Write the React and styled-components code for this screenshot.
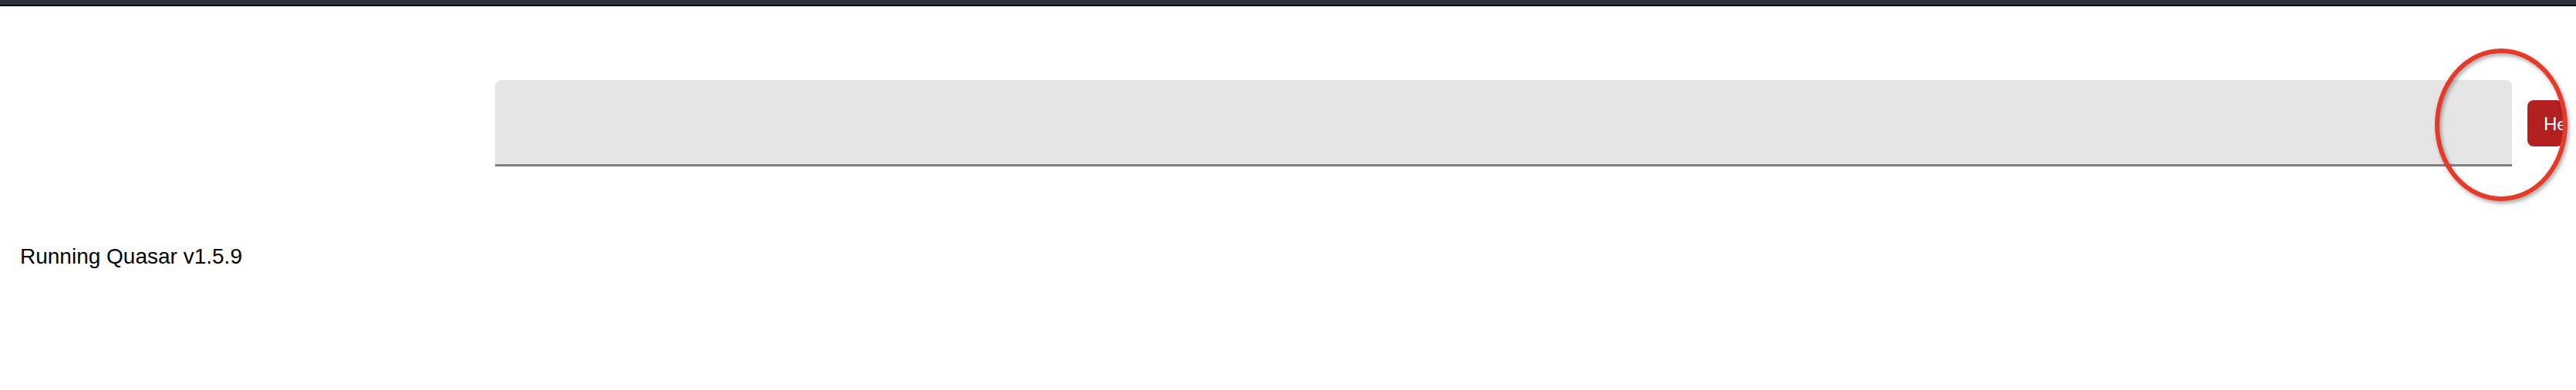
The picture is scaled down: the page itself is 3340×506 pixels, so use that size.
import React from "react";
import styled, { createGlobalStyle } from "styled-components";

const GlobalStyle = createGlobalStyle`
  html, body {
    margin: 0;
    padding: 0;
    background: #ffffff;
    font-family: "Liberation Sans", Arial, sans-serif;
  }
`;

const Screen = styled.div`
  position: relative;
  width: 3340px;
  height: 506px;
  overflow: hidden;
  background: #ffffff;
`;

const TopBar = styled.div`
  height: 6px;
  background: #30333e;
  border-bottom: 2px solid #0b0b0e;
  box-shadow: 0 1px 0 #dcdcdc;
`;

const FormRow = styled.div`
  display: flex;
  align-items: center;
  gap: 20px;
  margin-top: 96px;
  padding-left: 642px;
  padding-right: 17px;
`;

const FilledInput = styled.div`
  flex: 1;
  height: 109px;
  background: #e5e5e5;
  border-radius: 8px 8px 0 0;
  border-bottom: 3px solid #808080;
`;

const ActionButton = styled.button`
  flex: none;
  width: 46px;
  height: 60px;
  padding: 0 0 0 21px;
  border: none;
  border-radius: 8px;
  background: #b22020;
  color: #ffffff;
  font-family: Lato, "Open Sans", sans-serif;
  font-size: 23px;
  text-align: left;
  white-space: nowrap;
  overflow: visible;
`;

const Version = styled.div`
  margin-top: 101px;
  padding-left: 26px;
  font-size: 28px;
  line-height: 32px;
  color: #000000;
`;

const Annotation = styled.svg`
  position: absolute;
  left: 3140px;
  top: 45px;
  width: 200px;
  height: 240px;
  overflow: visible;
  pointer-events: none;
`;

export default function App() {
  return (
    <>
      <GlobalStyle />
      <Screen>
        <TopBar />
        <FormRow>
          <FilledInput />
          <ActionButton>He</ActionButton>
        </FormRow>
        <Version>Running Quasar v1.5.9</Version>
        <Annotation viewBox="0 0 200 240">
          <defs>
            <filter id="sh" x="-20%" y="-20%" width="140%" height="140%">
              <feDropShadow dx="2" dy="3" stdDeviation="2.5" floodColor="#000" floodOpacity="0.35" />
            </filter>
          </defs>
          <ellipse
            cx="103"
            cy="117"
            rx="83"
            ry="96"
            fill="none"
            stroke="#e23a2a"
            strokeWidth="6"
            filter="url(#sh)"
          />
        </Annotation>
      </Screen>
    </>
  );
}
